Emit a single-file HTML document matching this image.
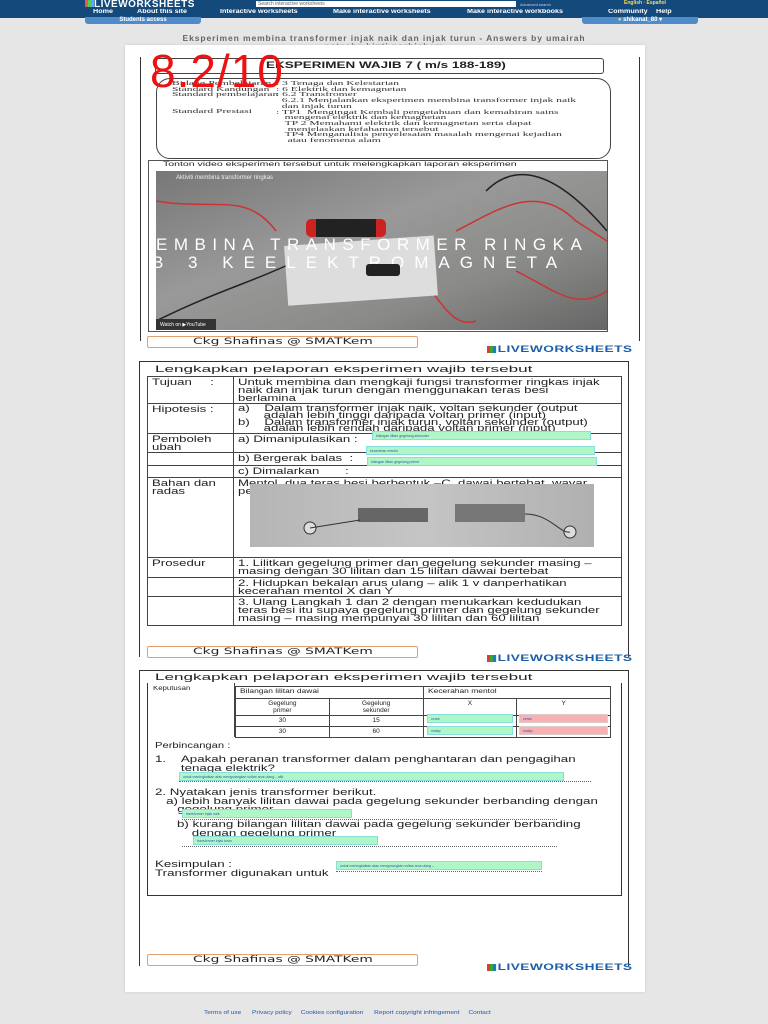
<!DOCTYPE html>
<html><head><meta charset="utf-8"><style>
*{margin:0;padding:0;box-sizing:border-box}
body{width:768px;height:1024px;background:#e6e6e6;font-family:"Liberation Sans",sans-serif;position:relative;overflow:hidden;color:#222}
.a{position:absolute}
.s{transform-origin:0 0;white-space:nowrap}
.hdr{left:0;top:0;width:768px;height:18px;background:#14497c}
.nav{font-size:6px;color:#fff;font-weight:bold;top:9px;transform:scaleX(1.2);transform-origin:0 0}
.tab{background:#4f8bc9;color:#fff;font-size:6px;font-weight:bold;text-align:center;border-radius:0 0 3px 3px;height:7px;line-height:7px;top:17px}
.page{left:125px;top:45px;width:520px;height:947px;background:#fff;box-shadow:0 0 3px #ccc}
.frame{border:1px solid #333}
.ckg{border:1px solid #e0a070;border-radius:2px;height:12px}
.ckg div{position:absolute;left:45px;top:0;font-family:"DejaVu Sans",sans-serif;font-size:8.5px;line-height:10px;transform:scaleX(1.62);transform-origin:0 0;white-space:nowrap}
.logo{font-weight:bold;font-size:9px;color:#1d5ea8;letter-spacing:.3px;transform:scaleX(1.52);transform-origin:0 0;white-space:nowrap}
.logo i{display:inline-block;width:6px;height:7px;background:linear-gradient(90deg,#e33 0 33%,#3a3 33% 66%,#27c 66%);margin-right:1px;vertical-align:-1px}
table{border-collapse:collapse;table-layout:fixed}
td{border:1px solid #444;vertical-align:top;font-size:8.8px;line-height:8px;padding:1px 4px;overflow:hidden}
td .s{transform:scaleX(1.5)}
.g{background:#b0f7c8;border:1px solid #8dd;height:9px;font-size:3.5px;color:#35a;line-height:8px;padding-left:3px;white-space:nowrap;overflow:hidden}
.p{background:#f9b0b0;border:1px solid #dcc;height:9px;font-size:3.5px;color:#35a;line-height:8px;padding-left:3px}
.h{font-size:9.5px;transform:scaleX(1.8)}
.ser{font-family:"Liberation Serif",serif;font-size:6.5px;line-height:5.7px;color:#333;transform:scaleX(1.78)}
.q{font-size:9px;line-height:8.5px;transform:scaleX(1.48)}
</style></head><body>
<div class="a hdr"></div>
<div class="a" style="left:85px;top:-1px;color:#fff;font-weight:bold;font-size:10px;letter-spacing:.5px"><span style="display:inline-block;width:9px;height:7px;background:linear-gradient(90deg,#e55 0 33%,#5c5 33% 66%,#5af 66%)"></span>LIVEWORKSHEETS</div>
<div class="a" style="left:256px;top:1px;width:260px;height:6px;background:#fff;font-size:5px;color:#666;line-height:6px;padding-left:2px">Search interactive worksheets</div>
<div class="a" style="left:520px;top:2px;font-size:4px;color:#ccd">Advanced search</div>
<div class="a" style="left:624px;top:0px;font-size:5px;color:#fd5;font-weight:bold">English · Español</div>
<div class="a nav" style="left:93px">Home</div>
<div class="a nav" style="left:137px">About this site</div>
<div class="a nav" style="left:220px">Interactive worksheets</div>
<div class="a nav" style="left:333px">Make interactive worksheets</div>
<div class="a nav" style="left:467px">Make interactive workbooks</div>
<div class="a nav" style="left:608px">Community</div>
<div class="a nav" style="left:656px">Help</div>
<div class="a tab" style="left:85px;width:116px">Students access</div>
<div class="a tab" style="left:582px;width:116px"><span style="color:#fd3">●</span> shikanat_80 ▾</div>
<div class="a" style="left:130px;top:34px;width:508px;text-align:center;font-size:8.5px;line-height:8px;font-weight:bold;color:#666;letter-spacing:.9px">Eksperimen membina transformer injak naik dan injak turun - Answers by umairah<br>natasha binti norhisham</div>
<div class="a page"></div>

<!-- Section 1 -->
<div class="a frame" style="left:140px;top:57px;width:500px;height:284px;border-bottom:none;border-top:none"></div>
<div class="a" style="left:155px;top:58px;width:449px;height:16px;border:1px solid #444;border-radius:3px"></div>
<div class="a s" style="left:266px;top:60px;font-size:9.5px;font-weight:bold;transform:scaleX(1.42)">EKSPERIMEN WAJIB 7 ( m/s 188-189)</div>
<div class="a" style="left:156px;top:78px;width:455px;height:81px;border:1px solid #444;border-radius:14px"></div>
<div class="a ser s" style="left:172px;top:81px">Bidang Pembelajaran<br>Standard Kandungan<br>Standard pembelajaran</div>
<div class="a ser s" style="left:172px;top:109px">Standard Prestasi</div>
<div class="a ser s" style="left:276px;top:81px">: 3 Tenaga dan Kelestarian<br>: 6 Elektrik dan kemagnetan<br>: 6.2 Transfromer<br>&nbsp;&nbsp;6.2.1 Menjalankan eksperimen membina transformer injak naik<br>&nbsp;&nbsp;dan injak turun<br>: TP1 &nbsp;Mengingat Kembali pengetahuan dan kemahiran sains<br>&nbsp;&nbsp;&nbsp;mengenai elektrik dan kemagnetan<br>&nbsp;&nbsp;&nbsp;TP 2 Memahami elektrik dan kemagnetan serta dapat<br>&nbsp;&nbsp;&nbsp;&nbsp;menjelaskan kefahaman tersebut<br>&nbsp;&nbsp;&nbsp;TP4 Menganalisis penyelesaian masalah mengenai kejadian<br>&nbsp;&nbsp;&nbsp;&nbsp;atau fenomena alam</div>
<div class="a" style="left:148px;top:160px;width:460px;height:172px;border:1px solid #555"></div>
<div class="a s" style="left:163px;top:161px;font-size:6.5px;transform:scaleX(1.62)">Tonton video eksperimen tersebut untuk melengkapkan laporan eksperimen</div>
<div class="a" style="left:156px;top:171px;width:451px;height:159px;background:linear-gradient(160deg,#777,#999 40%,#8a8a88 70%,#666);overflow:hidden">
<svg class="a" style="left:0;top:0" width="451" height="159"><path d="M0 30 C60 40 90 20 120 60 M300 60 C340 40 380 10 420 50 L451 70 M250 100 C280 110 290 160 320 150 M360 100 C400 120 420 140 451 120" stroke="#c33" stroke-width="1.5" fill="none"/><path d="M0 150 C60 120 100 110 140 90 M330 20 C360 -10 400 0 451 60" stroke="#222" stroke-width="1.5" fill="none"/><rect x="130" y="70" width="150" height="60" fill="#ddd" transform="rotate(-4 200 100)"/><rect x="150" y="48" width="80" height="18" rx="5" fill="#c22"/><rect x="160" y="48" width="60" height="18" fill="#222"/></svg>
<div class="a" style="left:20px;top:4px;font-size:6px;color:#eee">Aktiviti membina transformer ringkas</div>
<div class="a" style="left:0;top:64px;font-size:17px;color:#fff;letter-spacing:6.5px;white-space:nowrap">EMBINA TRANSFORMER RINGKA</div>
<div class="a" style="left:-4px;top:82px;font-size:17px;color:#fff;letter-spacing:10px;white-space:nowrap">B 3 KEELEKTROMAGNETA</div>
<div class="a" style="left:210px;top:93px;width:34px;height:12px;background:#222;border-radius:3px"></div>
<div class="a" style="left:0;top:148px;width:60px;height:11px;background:#333;font-size:5px;color:#fff;padding:3px 4px">Watch on ▶YouTube</div>
</div>
<div class="a ckg" style="left:147px;top:336px;width:271px"><div>Ckg Shafinas @ SMATKem</div></div>
<div class="a logo" style="left:487px;top:344px"><i></i>LIVEWORKSHEETS</div>

<!-- Section 2 -->
<div class="a frame" style="left:139px;top:361px;width:490px;height:296px;border-bottom:none"></div>
<div class="a s h" style="left:155px;top:364px">Lengkapkan pelaporan eksperimen wajib tersebut</div>
<table class="a" style="left:147px;top:376px;width:475px">
<tr style="height:24px"><td style="width:86px"><div class="s">Tujuan &nbsp;&nbsp;&nbsp;&nbsp;:</div></td><td><div class="s">Untuk membina dan mengkaji fungsi transformer ringkas injak<br>naik dan injak turun dengan menggunakan teras besi<br>berlamina</div></td></tr>
<tr style="height:25px"><td><div class="s">Hipotesis :</div></td><td><div class="s" style="line-height:6.8px">a) &nbsp;&nbsp;&nbsp;Dalam transformer injak naik, voltan sekunder (output<br>&nbsp;&nbsp;&nbsp;&nbsp;&nbsp;&nbsp;&nbsp;adalah lebih tinggi daripada voltan primer (input)<br>b) &nbsp;&nbsp;&nbsp;Dalam transformer injak turun, voltan sekunder (output)<br>&nbsp;&nbsp;&nbsp;&nbsp;&nbsp;&nbsp;&nbsp;adalah lebih rendah daripada voltan primer (input)</div></td></tr>
<tr style="height:18px"><td><div class="s">Pemboleh<br>ubah</div></td><td><div class="s">a) Dimanipulasikan :</div></td></tr>
<tr style="height:13px"><td></td><td><div class="s">b) Bergerak balas &nbsp;:</div></td></tr>
<tr style="height:12px"><td></td><td><div class="s">c) Dimalarkan &nbsp;&nbsp;&nbsp;&nbsp;&nbsp;&nbsp;:</div></td></tr>
<tr style="height:80px"><td><div class="s">Bahan dan<br>radas</div></td><td><div class="s">Mentol, dua teras besi berbentuk –C, dawai bertebat, wayar<br>penyambung, bekalan kuasa a.u ( voltan rendah)</div></td></tr>
<tr style="height:20px"><td><div class="s">Prosedur</div></td><td><div class="s">1. Lilitkan gegelung primer dan gegelung sekunder masing –<br>masing dengan 30 lilitan dan 15 lilitan dawai bertebat</div></td></tr>
<tr style="height:15px"><td></td><td><div class="s">2. Hidupkan bekalan arus ulang – alik 1 v danperhatikan<br>kecerahan mentol X dan Y</div></td></tr>
<tr style="height:29px"><td></td><td><div class="s">3. Ulang Langkah 1 dan 2 dengan menukarkan kedudukan<br>teras besi itu supaya gegelung primer dan gegelung sekunder<br>masing – masing mempunyai 30 lilitan dan 60 lilitan</div></td></tr>
</table>
<div class="a g" style="left:372px;top:431px;width:219px">bilangan lilitan gegelung sekunder</div>
<div class="a g" style="left:366px;top:446px;width:229px">kecerahan mentol</div>
<div class="a g" style="left:367px;top:457px;width:230px">bilangan lilitan gegelung primer</div>
<div class="a" style="left:250px;top:484px;width:344px;height:63px;background:linear-gradient(90deg,#b5b5b5,#c5c5c5 50%,#b0b0b0)">
<svg width="344" height="63"><rect x="108" y="24" width="70" height="14" fill="#666"/><rect x="205" y="20" width="70" height="18" fill="#777"/><circle cx="60" cy="44" r="6" fill="#ddd" stroke="#333"/><circle cx="320" cy="48" r="6" fill="#ddd" stroke="#333"/><path d="M60 44 L110 36 M275 30 C300 30 310 50 320 48" stroke="#333" fill="none"/></svg></div>
<div class="a ckg" style="left:147px;top:646px;width:271px"><div>Ckg Shafinas @ SMATKem</div></div>
<div class="a logo" style="left:487px;top:653px"><i></i>LIVEWORKSHEETS</div>

<!-- Section 3 -->
<div class="a frame" style="left:139px;top:670px;width:490px;height:296px;border-bottom:none"></div>
<div class="a s h" style="left:155px;top:672px">Lengkapkan pelaporan eksperimen wajib tersebut</div>
<div class="a frame" style="left:147px;top:683px;width:475px;height:213px;border-top:none"></div>
<div class="a" style="left:147px;top:683px;width:88px;height:54px;border-right:1px solid #444"></div>
<div class="a s" style="left:153px;top:686px;font-size:6px;transform:scaleX(1.3)">Keputusan</div>
<table class="a" style="left:235px;top:686px;width:376px">
<tr style="height:12px"><td colspan="2" style="font-size:6.5px"><div class="s" style="transform:scaleX(1.3)">Bilangan lilitan dawai</div></td><td colspan="2" style="font-size:6.5px"><div class="s" style="transform:scaleX(1.3)">Kecerahan mentol</div></td></tr>
<tr style="height:16px;text-align:center"><td style="width:93px;font-size:6.5px;line-height:7px">Gegelung<br>primer</td><td style="width:94px;font-size:6.5px;line-height:7px">Gegelung<br>sekunder</td><td style="font-size:6.5px">X</td><td style="font-size:6.5px">Y</td></tr>
<tr style="height:11px;text-align:center"><td style="font-size:6.5px">30</td><td style="font-size:6.5px">15</td><td></td><td></td></tr>
<tr style="height:11px;text-align:center"><td style="font-size:6.5px">30</td><td style="font-size:6.5px">60</td><td></td><td></td></tr>
</table>
<div class="a g" style="left:427px;top:714px;width:86px">cerah</div>
<div class="a p" style="left:519px;top:714px;width:89px">cerah</div>
<div class="a g" style="left:427px;top:726px;width:86px">malap</div>
<div class="a p" style="left:519px;top:726px;width:89px">malap</div>
<div class="a s" style="left:155px;top:741px;font-size:8px;transform:scaleX(1.4)">Perbincangan :</div>
<div class="a s q" style="left:155px;top:755px">1. &nbsp;&nbsp;&nbsp;Apakah peranan transformer dalam penghantaran dan pengagihan<br>&nbsp;&nbsp;&nbsp;&nbsp;&nbsp;&nbsp;&nbsp;tenaga elektrik?</div>
<div class="a g" style="left:179px;top:772px;width:385px">untuk meningkatkan atau mengurangkan voltan arus ulang – alik</div>
<div class="a" style="left:179px;top:781px;width:412px;border-top:1px dotted #666"></div>
<div class="a s q" style="left:155px;top:788px">2. Nyatakan jenis transformer berikut.<br>&nbsp;&nbsp;&nbsp;a) lebih banyak lilitan dawai pada gegelung sekunder berbanding dengan<br>&nbsp;&nbsp;&nbsp;&nbsp;&nbsp;&nbsp;gegelung primer</div>
<div class="a g" style="left:182px;top:809px;width:170px">transformer injak naik</div>
<div class="a" style="left:182px;top:819px;width:375px;border-top:1px dotted #666"></div>
<div class="a s q" style="left:177px;top:820px">b) kurang bilangan lilitan dawai pada gegelung sekunder berbanding<br>&nbsp;&nbsp;&nbsp;&nbsp;dengan gegelung primer</div>
<div class="a g" style="left:193px;top:836px;width:185px">transformer injak turun</div>
<div class="a" style="left:182px;top:846px;width:375px;border-top:1px dotted #666"></div>
<div class="a s q" style="left:155px;top:860px">Kesimpulan :<br>Transformer digunakan untuk</div>
<div class="a g" style="left:336px;top:861px;width:206px">untuk meningkatkan atau mengurangkan voltan arus ulang –</div>
<div class="a" style="left:336px;top:871px;width:206px;border-top:1px dotted #666"></div>
<div class="a ckg" style="left:147px;top:954px;width:271px"><div>Ckg Shafinas @ SMATKem</div></div>
<div class="a logo" style="left:487px;top:962px"><i></i>LIVEWORKSHEETS</div>

<div class="a s" style="left:204px;top:1010px;font-size:5px;color:#2255aa;transform:scaleX(1.3)">Terms of use &nbsp;&nbsp;&nbsp;&nbsp; Privacy policy &nbsp;&nbsp;&nbsp; Cookies configuration &nbsp;&nbsp;&nbsp;&nbsp; Report copyright infringement &nbsp;&nbsp;&nbsp; Contact</div>

<div class="a" style="left:150px;top:46px;font-size:46px;color:#ee1111;line-height:50px;letter-spacing:1px">8.2/10</div>
</body></html>
